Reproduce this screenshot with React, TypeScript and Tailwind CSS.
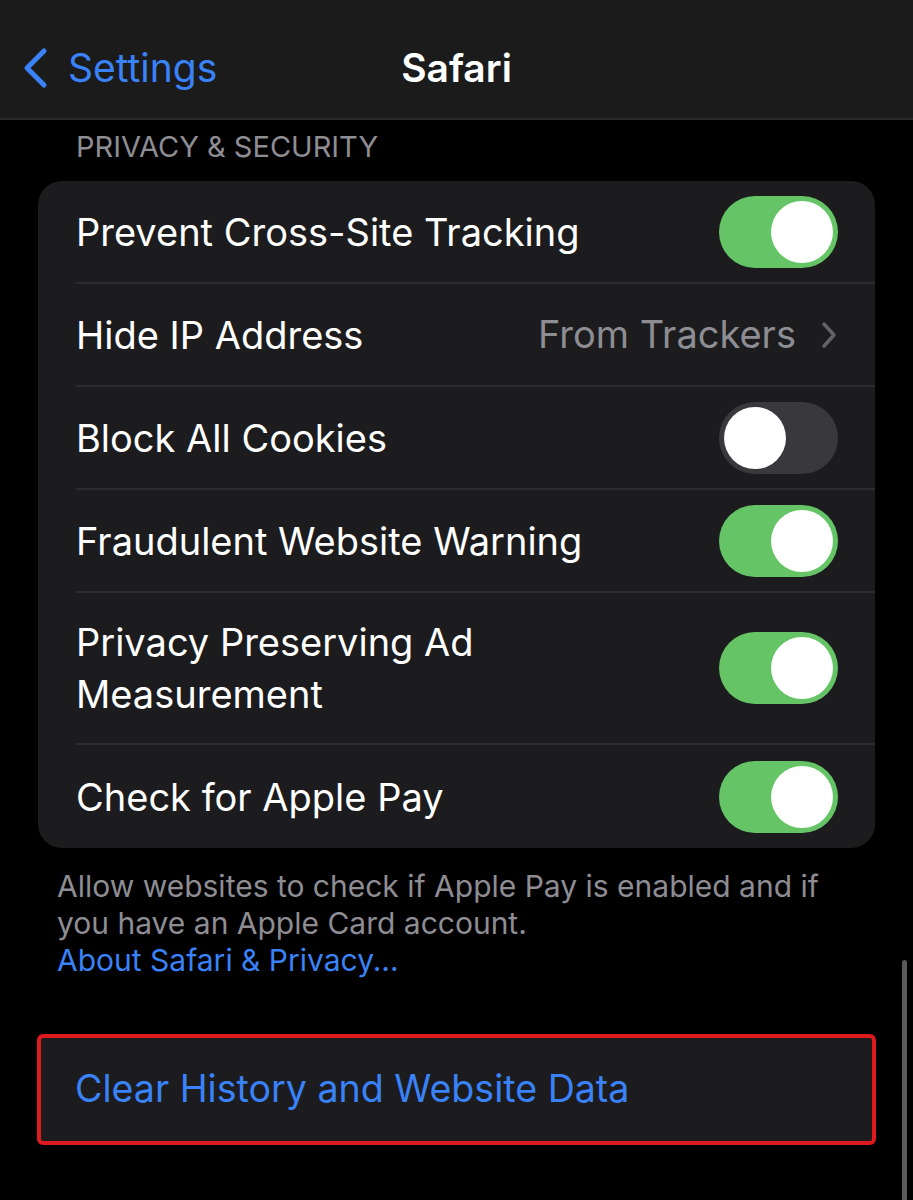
import React from "react";

const font = { fontFamily: "Inter, 'Noto Sans', sans-serif" };

function Toggle({ on }: { on: boolean }) {
  return (
    <div
      className={`relative w-[119px] h-[72px] rounded-full shrink-0 ${on ? "bg-[#65c466]" : "bg-[#39393d]"}`}
    >
      <div
        className={`absolute top-[5px] w-[62px] h-[62px] rounded-full bg-white ${on ? "right-[5px]" : "left-[5px]"}`}
      />
    </div>
  );
}

function Row({ label, right, last, tall }: { label: React.ReactNode; right: React.ReactNode; last?: boolean; tall?: boolean }) {
  return (
    <div className="pl-[38px]">
      <div
        className={`flex items-center justify-between pr-[37px] ${tall ? "h-[152px]" : "h-[103px]"} ${last ? "" : "border-b-2 border-[#2c2c2e]"}`}
      >
        <div className="text-[38px] leading-[52px] text-white">{label}</div>
        {right}
      </div>
    </div>
  );
}

export default function App() {
  return (
    <div className="w-[913px] h-[1200px] bg-black relative overflow-hidden" style={font}>
      <div className="h-[120px] bg-[#1b1b1b] border-b-2 border-[#2a2a2a] relative flex items-center">
        <div className="flex items-center pl-[20px] pt-[18px]">
          <svg width="30" height="42" viewBox="0 0 30 42" className="mr-[18px]">
            <path d="M24 4 L7 21 L24 38" fill="none" stroke="#3a82f7" strokeWidth="5" strokeLinecap="round" strokeLinejoin="round" />
          </svg>
          <span className="text-[39px] text-[#3a82f7]">Settings</span>
        </div>
        <div className="absolute left-0 right-0 top-[18px] bottom-0 flex items-center justify-center text-[39px] font-semibold text-white">
          Safari
        </div>
      </div>

      <div className="px-[38px]">
        <div className="pl-[38px] pt-[9px] h-[61px] text-[29px] leading-[36px] text-[#8d8d93]">PRIVACY &amp; SECURITY</div>
        <div className="bg-[#1c1c1e] rounded-[24px] overflow-hidden">
          <Row label="Prevent Cross-Site Tracking" right={<Toggle on />} />
          <Row
            label="Hide IP Address"
            right={
              <div className="flex items-center text-[#8d8d93] text-[38px]">
                <span>From Trackers</span>
                <svg width="18" height="30" viewBox="0 0 18 30" className="ml-[24px]">
                  <path d="M4 4 L14 15 L4 26" fill="none" stroke="#636366" strokeWidth="3.5" strokeLinecap="round" strokeLinejoin="round" />
                </svg>
              </div>
            }
          />
          <Row label="Block All Cookies" right={<Toggle on={false} />} />
          <Row label="Fraudulent Website Warning" right={<Toggle on />} />
          <Row
            tall
            label={
              <>
                Privacy Preserving Ad
                <br />
                Measurement
              </>
            }
            right={<Toggle on />}
          />
          <Row label="Check for Apple Pay" right={<Toggle on />} last />
        </div>
        <div className="pl-[19px] pt-[20px] text-[30px] leading-[37px] text-[#8d8d93]">
          Allow websites to check if Apple Pay is enabled and if
          <br />
          you have an Apple Card account.
          <div className="text-[#3a82f7]">About Safari &amp; Privacy...</div>
        </div>
        <div className="mt-[55px] -ml-[1px] w-[839px] h-[111px] border-[4px] border-[#e0191f] rounded-[6px] bg-[#1c1c1e] flex items-center pl-[34px]">
          <span className="text-[37.6px] text-[#3a82f7]">Clear History and Website Data</span>
        </div>
      </div>

      <div className="absolute right-[6px] top-[960px] w-[5px] h-[260px] rounded-full bg-[#5a5a5e]" />
    </div>
  );
}
